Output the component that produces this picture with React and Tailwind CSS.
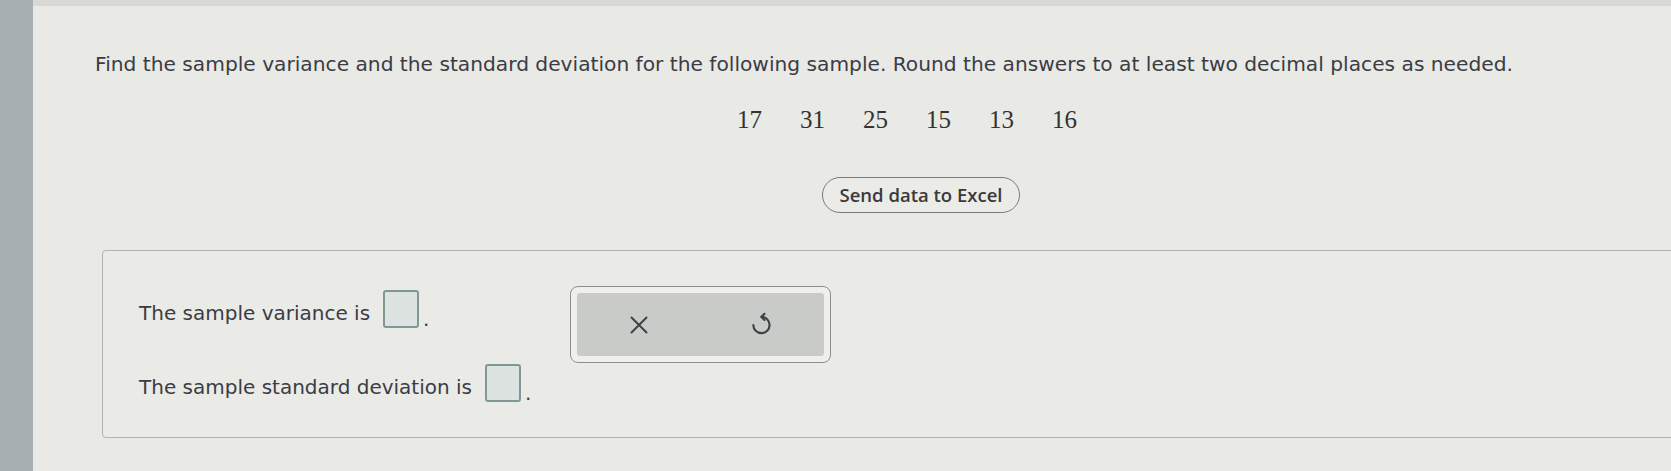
import React from 'react';

const SAMPLE = [17, 31, 25, 15, 13, 16];

function AnswerBox() {
  return (
    <span className="inline-block w-[36px] h-[38px] border-2 border-[#7f9895] rounded-[3px] bg-[#dde3e0]" />
  );
}

function UndoIcon() {
  return (
    <svg width="26" height="26" viewBox="0 0 24 24" fill="none" stroke="#3f4347" strokeWidth="2" strokeLinecap="round" strokeLinejoin="round">
      <path d="M11.5 4.5a7.5 7.5 0 1 1-7.5 7.5" />
      <path d="M14.3 1.7l-2.8 2.8 2.8 2.8" />
    </svg>
  );
}

function ClearIcon() {
  return (
    <svg width="18" height="18" viewBox="0 0 18 18" fill="none" stroke="#3f4347" strokeWidth="2" strokeLinecap="round">
      <path d="M1.5 1.5l15 15M16.5 1.5l-15 15" />
    </svg>
  );
}

export default function App() {
  return (
    <div className="w-[1671px] h-[471px] overflow-hidden flex bg-[#e9e9e6]">
      {/* left edge */}
      <div className="w-[33px] flex-shrink-0 bg-[#a6afb2]" />

      <div className="flex-1 flex flex-col">
        <div className="h-[6px] bg-[#d8d8d6]" />

        {/* Question */}
        <p className="mt-[46px] pl-[62px] text-[20.2px] leading-[24px] text-[#3b3c44] whitespace-nowrap" style={{ fontFamily: '"DejaVu Sans", sans-serif' }}>
          Find the sample variance and the standard deviation for the following sample. Round the answers to at least two decimal places as needed.
        </p>

        {/* Data */}
        <div className="mt-[29px] ml-[704px] flex gap-[38px] text-[25px] leading-[30px] text-[#333]" style={{ fontFamily: '"Liberation Serif", serif' }}>
          {SAMPLE.map(n => (
            <span key={n}>{n}</span>
          ))}
        </div>

        <div className="mt-[42px] ml-[789px]">
          <button className="w-[198px] h-[36px] rounded-full border-[1.5px] border-[#7a7a7a] text-[18.5px] font-semibold text-[#3a3a3a] bg-[#ebebe8]" style={{ fontFamily: '"Open Sans", sans-serif' }}>
            Send data to Excel
          </button>
        </div>

        {/* Answer area */}
        <div className="mt-[37px] ml-[69px] w-[1620px] h-[188px] border border-[#b2b2b0] rounded-[4px] bg-[#eaeae7] flex items-start pt-[35px]">
          <div className="w-[467px] pl-[36px] mt-[4px] flex flex-col gap-[28px] text-[20px] text-[#3b3c44]" style={{ fontFamily: '"DejaVu Sans", sans-serif' }}>
            <div className="flex items-center">
              <span>The sample variance is</span>
              <span className="ml-[13px]"><AnswerBox /></span>
              <span className="ml-[4px] self-end mb-[5px] leading-[24px]">.</span>
            </div>
            <div className="flex items-center">
              <span>The sample standard deviation is</span>
              <span className="ml-[13px]"><AnswerBox /></span>
              <span className="ml-[4px] self-end mb-[5px] leading-[24px]">.</span>
            </div>
          </div>

          <div className="w-[261px] h-[77px] border-[1.5px] border-[#8e8e8c] rounded-[8px] bg-[#efefed] p-[6px]">
            <div className="h-full rounded-[3px] bg-[#c9cbc9] grid grid-cols-2 items-center justify-items-center">
              <ClearIcon />
              <UndoIcon />
            </div>
          </div>
        </div>
      </div>
    </div>
  );
}
